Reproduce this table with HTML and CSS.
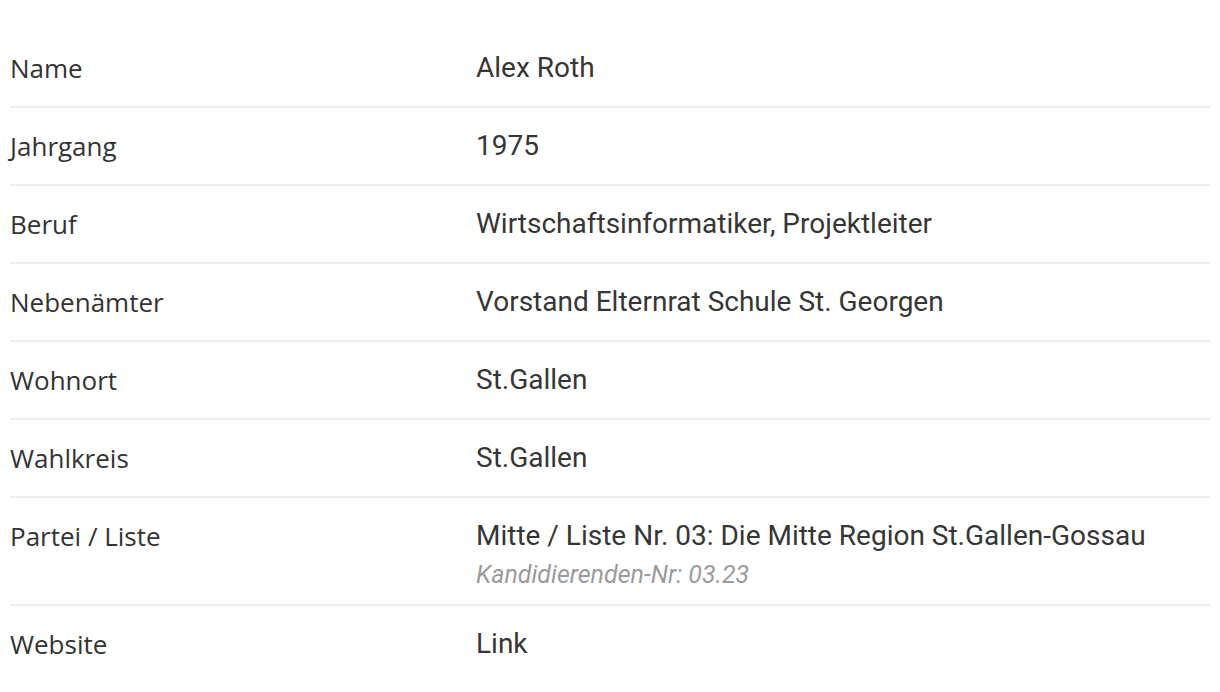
FILE: index.html
```html
<!DOCTYPE html>
<html lang="de">
<head>
<meta charset="utf-8">
<title>Alex Roth</title>
<link rel="stylesheet" href="styles.css">
</head>
<body>
<dl class="profile">
  <div class="row">
    <dt class="label">Name</dt>
    <dd class="value">Alex Roth</dd>
  </div>
  <div class="row">
    <dt class="label">Jahrgang</dt>
    <dd class="value">1975</dd>
  </div>
  <div class="row">
    <dt class="label">Beruf</dt>
    <dd class="value">Wirtschaftsinformatiker, Projektleiter</dd>
  </div>
  <div class="row">
    <dt class="label">Nebenämter</dt>
    <dd class="value">Vorstand Elternrat Schule St. Georgen</dd>
  </div>
  <div class="row">
    <dt class="label">Wohnort</dt>
    <dd class="value">St.Gallen</dd>
  </div>
  <div class="row">
    <dt class="label">Wahlkreis</dt>
    <dd class="value">St.Gallen</dd>
  </div>
  <div class="row">
    <dt class="label">Partei / Liste</dt>
    <dd class="value">
      <div>Mitte / Liste Nr. 03: Die Mitte Region St.Gallen-Gossau</div>
      <div class="sub">Kandidierenden-Nr: 03.23</div>
    </dd>
  </div>
  <div class="row">
    <dt class="label">Website</dt>
    <dd class="value"><a class="link" href="#">Link</a></dd>
  </div>
</dl>
</body>
</html>
```
FILE: styles.css
```css
html, body {
  margin: 0;
  padding: 0;
  background: #ffffff;
}

body {
  padding: 30px 10px 0;
  color: #333333;
}

.profile {
  margin: 0;
  display: flex;
  flex-direction: column;
}

.row {
  display: grid;
  grid-template-columns: 466px 1fr;
  padding: 20px 0 20px;
  border-bottom: 2px solid #ececec;
}

.row:last-child {
  border-bottom: none;
}

.label {
  margin: 0;
  font-family: "Open Sans", "Noto Sans", sans-serif;
  font-size: 26px;
  line-height: 36px;
  color: #333333;
}

.value {
  margin: 0;
  font-family: Roboto, "Liberation Sans", sans-serif;
  font-size: 28px;
  line-height: 36px;
  color: #363636;
}

.sub {
  margin-top: 10px;
  margin-bottom: -2px;
  font-size: 25px;
  line-height: 22px;
  font-style: italic;
  color: #9b9b9b;
}

.link {
  color: inherit;
  text-decoration: none;
}
```
